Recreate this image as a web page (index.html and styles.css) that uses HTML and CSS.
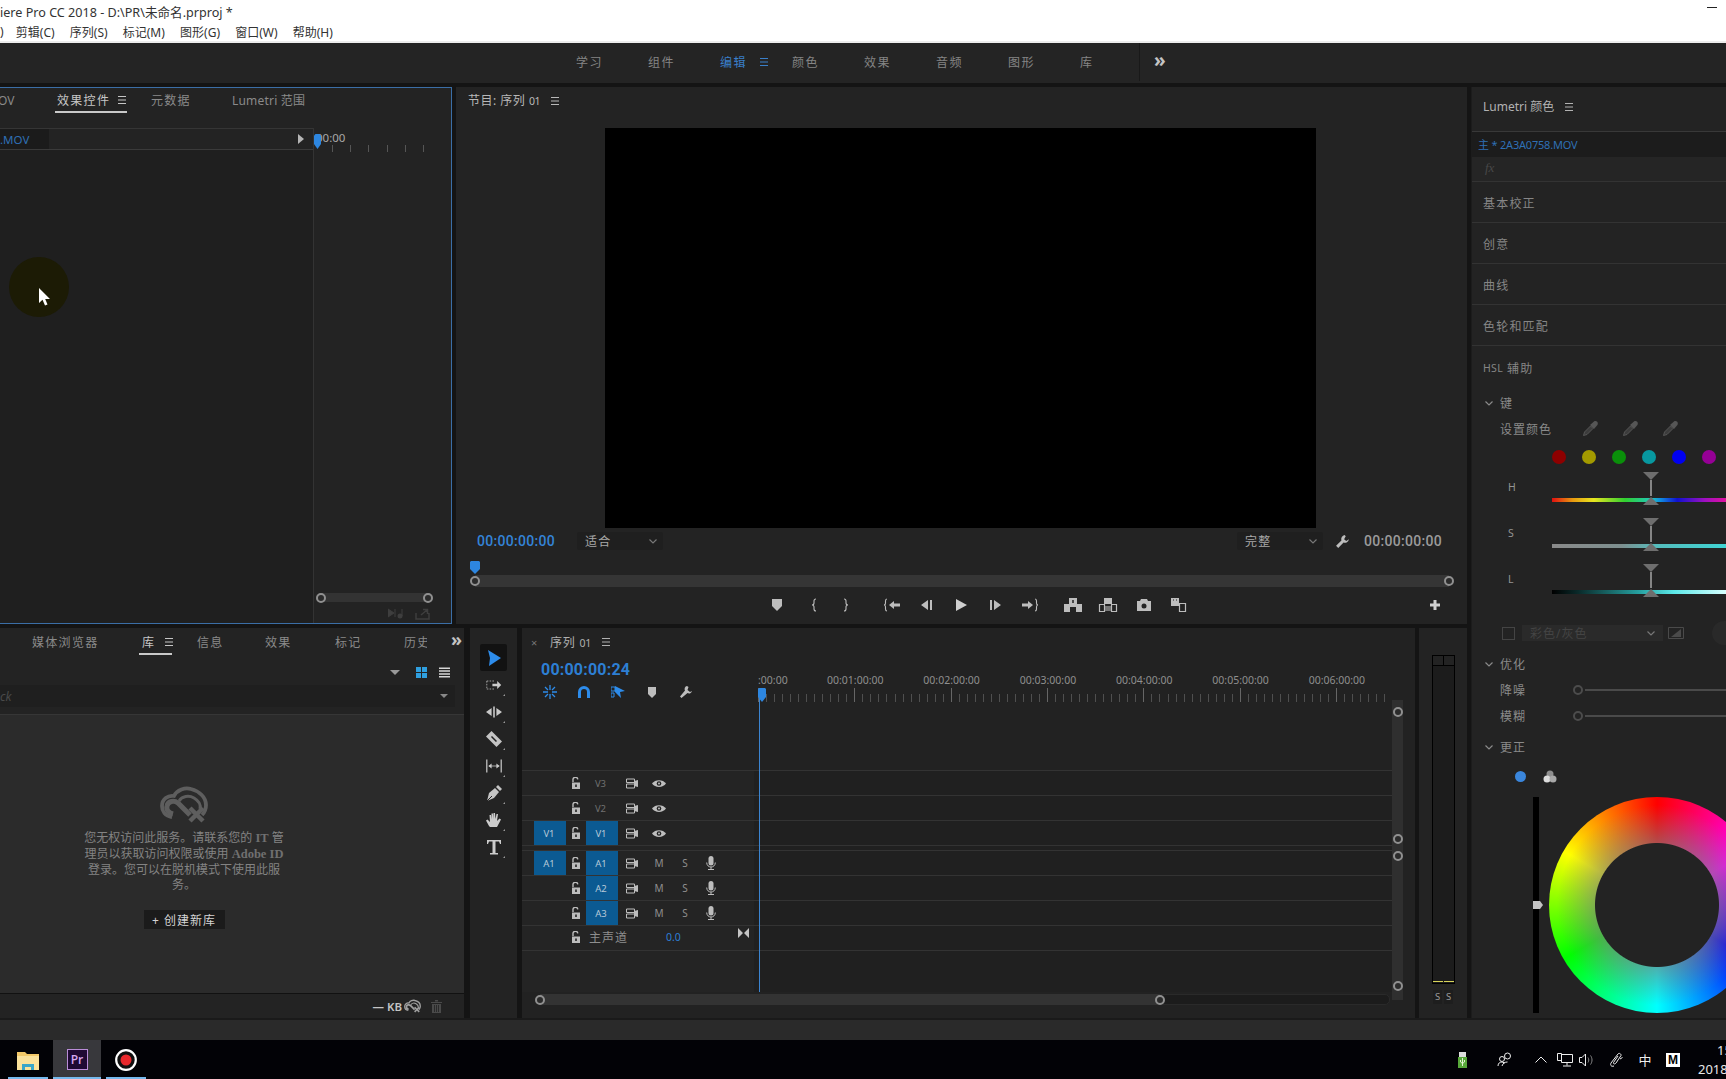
FILE: index.html
```html
<!DOCTYPE html>
<html lang="zh-CN">
<head>
<meta charset="utf-8">
<title>Premiere Pro</title>
<link rel="stylesheet" href="styles.css">
</head>
<body>
<svg class="defs" xmlns="http://www.w3.org/2000/svg">
  <symbol id="i-menu" viewBox="0 0 8 8"><path d="M0 .5h8M0 4h8M0 7.5h8" stroke="currentColor" fill="none"/></symbol>
  <symbol id="i-lock" viewBox="0 0 10 12"><path d="M2 5V3a2.4 2.4 0 0 1 4.8-.6" stroke="currentColor" stroke-width="1.4" fill="none"/><path d="M1 5.5h8V12H1z" fill="currentColor"/><path d="M4.2 7.5h1.6v2.5H4.2z" fill="#222"/></symbol>
  <symbol id="i-sync" viewBox="0 0 13 11"><path d="M.5 1h8v3.5h-8zM.5 6h8v4h-8z" stroke="currentColor" fill="none"/><path d="M8 3l4-1v7l-4-1z" fill="currentColor"/></symbol>
  <symbol id="i-eye" viewBox="0 0 14 9"><path d="M0 4.5C3 0 11 0 14 4.5 11 9 3 9 0 4.5z" fill="currentColor"/><circle cx="7" cy="4.5" r="2.3" fill="#232323"/><circle cx="7" cy="4.5" r="1" fill="currentColor"/></symbol>
  <symbol id="i-mic" viewBox="0 0 10 14"><rect x="2.5" y="0" width="5" height="9.5" rx="2.5" fill="currentColor"/><path d="M.7 6.5c0 6 8.600 6 8.600 0M5 11v2M2 13.500h6" stroke="currentColor" fill="none"/></symbol>
  <symbol id="i-chev" viewBox="0 0 8 5"><path d="M.5.5 4 4 7.500.5" stroke="currentColor" stroke-width="1.200" fill="none"/></symbol>
  <symbol id="i-dropper" viewBox="0 0 16 16"><path d="M1.500 14.500 2.500 11 8.500 5l2.500 2.500-6 6z" fill="#3c3c3c" stroke="currentColor"/><path d="M8 4l4-3.500c1-.8 2.500-.5 3.200.3.700.8.900 2.200.2 3.200L12 8z" fill="currentColor"/></symbol>
  <symbol id="i-handle" viewBox="0 0 16 33"><path d="M0 0h16L8 8z" fill="#6e6e6e"/><path d="M8 8v16" stroke="#e8e8e8"/><path d="M8 25l8 8H0z" fill="#6e6e6e"/></symbol>
  <symbol id="i-cloud" viewBox="0 0 48 37"><path d="M12 31C5 30 2 25 2 20 2 13 8 9 14 10 17 4 25 1 31 3c8 2 15 8 15 16 0 5-2 8-4 10" fill="none" stroke="currentColor" stroke-width="3.800"/><path d="M13 28c-4-1-7-4-6-8 1-5 7-6 11-3l12 12" fill="none" stroke="currentColor" stroke-width="5"/><path d="M19 15c3-5 10-6 15-3 5 3 7 7 6 11" fill="none" stroke="currentColor" stroke-width="3"/><path d="M30 22l13 13M43 22 30 35" stroke="currentColor" stroke-width="4.500"/></symbol>
</svg>

<div class="app">
  <header class="titlebar">
    <span>iere Pro CC 2018 - D:\PR\未命名.prproj *</span>
    <i class="min-dash"></i>
  </header>
  <nav class="menubar">
    <span class="frag">)</span>
    <span>剪辑(C)</span><span>序列(S)</span><span>标记(M)</span><span>图形(G)</span><span>窗口(W)</span><span>帮助(H)</span>
  </nav>

  <div class="workspaces">
    <span class="ws">学习</span>
    <span class="ws">组件</span>
    <span class="ws active">编辑<svg class="menu-ic ws-menu"><use href="#i-menu"/></svg></span>
    <span class="ws">颜色</span>
    <span class="ws">效果</span>
    <span class="ws">音频</span>
    <span class="ws">图形</span>
    <span class="ws last">库</span>
    <span class="ws-more">»</span>
  </div>

  <main class="main">
    <div class="stack">
      <div class="row-top">
        <section class="panel fx">
          <div class="fx-tabs">
            <span class="tab ov">OV</span>
            <span class="tab on">效果控件<svg class="menu-ic"><use href="#i-menu"/></svg></span>
            <span class="tab">元数据</span>
            <span class="tab lum">Lumetri 范围</span>
          </div>
          <div class="fx-body">
            <div class="fx-left">
              <div class="fx-strip">
                <span class="fx-clip">.MOV</span>
                <svg class="fx-arrow" viewBox="0 0 6 10"><path d="M0 0l6 5-6 5z" fill="#b5b5b5"/></svg>
              </div>
            </div>
            <div class="fx-right">
              <div class="fx-time">00:00</div>
              <div class="fx-ticks"></div>
              <div class="fx-fill"></div>
              <div class="fx-scroll"><i class="ring"></i><i class="ring"></i></div>
              <div class="fx-foot">
                <svg viewBox="0 0 16 12"><path d="M0 1l6 4-6 4zM7 1v8" fill="#3e3e3e" stroke="#3e3e3e"/><circle cx="12" cy="8" r="2.500" fill="#3e3e3e"/><path d="M14 8V1" stroke="#3e3e3e"/></svg>
                <svg viewBox="0 0 16 12"><path d="M1 5v6h13V5M6 7l6-5M8 1.500h4.500V6" fill="none" stroke="#3e3e3e" stroke-width="1.500"/></svg>
              </div>
              <svg class="fx-head" viewBox="0 0 7 15"><path d="M0 1.500 1.500 0h4L7 1.500V10l-3.500 5L0 10z" fill="#2d86e0"/></svg>
            </div>
          </div>
          <div class="halo"></div>
          <svg class="cursor" viewBox="0 0 12 18"><path d="M0 0v15l3.500-3.300L6 17.500l2.500-1L6.200 11H11z" fill="#fff"/></svg>
        </section>

        <section class="panel program">
          <div class="pg-title"><span>节目: 序列 <span class="num">01</span></span><svg class="menu-ic"><use href="#i-menu"/></svg></div>
          <div class="video"></div>
          <div class="pg-tc">
            <span class="tc-blue">00:00:00:00</span>
            <span class="drop fit">适合<svg class="drop-ch"><use href="#i-chev"/></svg></span>
            <span class="grow"></span>
            <span class="drop full">完整<svg class="drop-ch"><use href="#i-chev"/></svg></span>
            <svg class="wrench" viewBox="0 0 14 14"><path d="M9 1a3.800 3.800 0 0 0-3 5L1 11l2 2 5-5a3.800 3.800 0 0 0 5-3l-2.500 1.500L8.500 5 10 2z" fill="#bdbdbd"/></svg>
            <span class="tc-grey">00:00:00:00</span>
          </div>
          <div class="pg-head"><svg viewBox="0 0 10 13"><path d="M0 1l1-1h8l1 1v7l-5 5-5-5z" fill="#2d86e0"/></svg></div>
          <div class="pg-scroll"><i class="ring"></i><i class="ring"></i></div>
          <div class="ctrls">
            <svg viewBox="0 0 20 14"><path d="M5 1h10v7l-5 5-5-5z"/></svg>
            <svg viewBox="0 0 20 14"><path d="M12 1c-2 0-2 1-2 2v2c0 1-1 2-2 2 1 0 2 1 2 2v2c0 1 0 2 2 2" fill="none" stroke-width="1.100"/></svg>
            <svg viewBox="0 0 20 14"><path d="M8 1c2 0 2 1 2 2v2c0 1 1 2 2 2-1 0-2 1-2 2v2c0 1 0 2-2 2" fill="none" stroke-width="1.100"/></svg>
            <svg viewBox="0 0 20 14"><path d="M5 1c-1.500 0-1.500 1-1.500 2v2c0 1-.7 2-1.500 2 .8 0 1.500 1 1.500 2v2c0 1 0 2 1.500 2" fill="none" stroke-width="1.100"/><path d="M7 7l5-4v2.500h6v3h-6V11z"/></svg>
            <svg viewBox="0 0 20 14"><path d="M12 2v10L5 7zM14 2h2v10h-2z"/></svg>
            <svg viewBox="0 0 20 14"><path d="M5 1l11 6-11 6z" fill="#cfcfcf" stroke="none"/></svg>
            <svg viewBox="0 0 20 14"><path d="M8 2v10l7-5zM4 2h2v10H4z"/></svg>
            <svg viewBox="0 0 20 14"><path d="M13 7 8 3v2.500H2v3h6V11z"/><path d="M15 1c1.500 0 1.500 1 1.500 2v2c0 1 .7 2 1.500 2-.8 0-1.500 1-1.500 2v2c0 1 0 2-1.500 2" fill="none" stroke-width="1.100"/></svg>
            <svg viewBox="0 0 20 14"><path d="M6 0h8v6h5v8h-6V9H7v5H1V6h5z"/><path d="M10 2v3" stroke="#232323" fill="none" stroke-width="1.500"/></svg>
            <svg viewBox="0 0 20 14"><path d="M6 0h8v6H6z"/><path d="M1.500 6.500h5v7h-5zM13.500 6.500h5v7h-5z" fill="none" stroke-width="1.200"/><path d="M7 8h6v5H7z" fill="#777"/></svg>
            <svg viewBox="0 0 20 14"><path d="M3 3h3l1-2h6l1 2h3v10H3z"/><circle cx="10" cy="8" r="2.500" fill="#232323" stroke="none"/></svg>
            <svg viewBox="0 0 20 14"><path d="M3 0h8v8H3z"/><path d="M11.500 5.500h6v8h-6z" fill="none" stroke-width="1.200"/><path d="M5 2h1M8 2h1M13 8h2M13 11h2" stroke="#232323" stroke-width="1"/></svg>
            <svg viewBox="0 0 20 14"><path d="M8.500 2h3v3.500H15v3h-3.500V12h-3V8.500H5v-3h3.500z" fill="#cfcfcf" stroke="none"/></svg>
          </div>
        </section>
      </div>

      <div class="row-bottom">
        <section class="panel lib">
          <div class="lib-tabs">
            <span class="tab">媒体浏览器</span>
            <span class="tab on lib-on">库<svg class="menu-ic"><use href="#i-menu"/></svg></span>
            <span class="tab">信息</span>
            <span class="tab">效果</span>
            <span class="tab">标记</span>
            <span class="tab cut">历史</span>
            <span class="tab more">»</span>
          </div>
          <div class="lib-view">
            <i class="tri"></i>
            <svg class="lib-grid" viewBox="0 0 11 11"><path d="M0 0h5v5H0zM6 0h5v5H6zM0 6h5v5H0zM6 6h5v5H6z" fill="#2f9fdf"/></svg>
            <svg class="lib-list" viewBox="0 0 11 11"><path d="M0 .5h11v1.500H0zM0 3.300h11v1.500H0zM0 6.200h11v1.500H0zM0 9h11v1.500H0z" fill="#d6d6d6"/></svg>
          </div>
          <div class="lib-search"><em>ck</em><i class="tri small"></i></div>
          <div class="lib-body">
            <svg class="cloud"><use href="#i-cloud"/></svg>
            <p class="lib-msg">您无权访问此服务。请联系您的 <b>IT</b> 管<br>理员以获取访问权限或使用 <b>Adobe ID</b><br>登录。您可以在脱机模式下使用此服<br>务。</p>
            <button class="lib-btn">+ 创建新库</button>
          </div>
          <div class="lib-foot">
            <span>— KB</span>
            <svg class="foot-cloud"><use href="#i-cloud"/></svg>
            <svg class="trash" viewBox="0 0 11 13"><path d="M0 2h11v1H0zM4 0h3v1.500H4zM1 4h9v9H1z" fill="#4a4a4a"/><path d="M3.500 5v7M5.500 5v7M7.500 5v7" stroke="#2a2a2a"/></svg>
          </div>
        </section>

        <section class="panel tools">
          <span class="tool sel"><svg viewBox="0 0 16 16"><path d="M2 0l13 8-12 8 1-8z" fill="#2d8ceb"/></svg></span>
          <span class="tool"><svg viewBox="0 0 20 16"><path d="M1 3h9M1 13h9M1 3v10" stroke="#bbb" stroke-dasharray="2 1.500" fill="none"/><path d="M8 6.500h6V3l5 5-5 5V9.500H8z" fill="#ccc"/></svg></span>
          <span class="tool"><svg viewBox="0 0 20 16"><path d="M0 8l7-5v10zM20 8l-7-5v10z" fill="#c8c8c8"/><path d="M9 1h2v14H9z" fill="#c8c8c8"/></svg></span>
          <span class="tool"><svg viewBox="0 0 16 16"><path d="M5.500 0 16 10.500 10.500 16 0 5.500z" fill="#c4c4c4"/><path d="M5.500 5.500l5 5" stroke="#222" stroke-width="1.500"/></svg></span>
          <span class="tool"><svg viewBox="0 0 20 16"><path d="M1 0v16M19 0v16" stroke="#ccc" stroke-width="1.500"/><path d="M3.500 8h13" stroke="#ccc"/><path d="M3 8l4-3v6zM17 8l-4-3v6z" fill="#ccc"/></svg></span>
          <span class="tool"><svg viewBox="0 0 16 16"><path d="M1 16l2-8 6-5 4 4-5 6z" fill="#c4c4c4"/><path d="M10 2l2-2 4 4-2 2z" fill="#c4c4c4"/><path d="M1 16l5-5" stroke="#222"/></svg></span>
          <span class="tool"><svg viewBox="0 0 16 16"><path d="M3 14 0 8.500l1.500-1L4 10 3.500 3H5l.5 4.500V1.500H7L7.500 7V1h1.500L9.500 7l1-5H12l-1 7 2.500-2.500 1.500 1L11 15H4z" fill="#ccc"/></svg></span>
          <span class="tool"><svg viewBox="0 0 16 16"><path d="M1 1h14v4h-1l-1-2.500H9.500V14H12v1.500H4V14h2.500V2.500H3L2 5H1z" fill="#ccc"/></svg></span>
        </section>

        <section class="panel tl">
          <div class="tl-tab">
            <span class="tl-x">×</span><span class="tl-name">序列 <span class="num">01</span></span><svg class="menu-ic"><use href="#i-menu"/></svg>
          </div>
          <div class="tl-head">
            <div class="tl-left">
              <div class="tl-tc">00:00:00:24</div>
              <div class="tl-tools">
                <svg viewBox="0 0 14 14"><path d="M7 0v5M7 9v5M0 7h5M9 7h5M2 2l3 3M9 9l3 3M12 2 9 5M2 12l3-3" stroke="#2d8ceb" stroke-width="1.300"/></svg>
                <svg viewBox="0 0 14 14"><path d="M2.500 13V7a4.500 4.500 0 0 1 9 0v6" fill="none" stroke="#2d8ceb" stroke-width="3"/></svg>
                <svg viewBox="0 0 14 14"><path d="M4 1l10 5-5 1 1 6-6-6z" fill="#2d8ceb"/><path d="M0 2h4v4H0zM0 8h3v4H0z" fill="none" stroke="#2d8ceb"/></svg>
                <svg viewBox="0 0 14 14"><path d="M3 2h8v7l-4 4-4-4z" fill="#bdbdbd"/></svg>
                <svg viewBox="0 0 14 14"><path d="M8 1a3 3 0 0 0-2 4.500l-5 6 1.500 1.500 6-5a3 3 0 0 0 4.500-2L11 7 8.500 5 9.500 2z" fill="#bdbdbd"/></svg>
              </div>
            </div>
            <div class="tl-ruler">
              <div class="tl-labels">
                <span>:00:00</span><span>00:01:00:00</span><span>00:02:00:00</span><span>00:03:00:00</span><span>00:04:00:00</span><span>00:05:00:00</span><span>00:06:00:00</span>
              </div>
              <div class="tl-ticks"></div>
            </div>
          </div>
          <div class="tl-body">
            <div class="tracks">
              <div class="tracks-top"></div>
              <div class="trk">
                <span></span><span></span><svg class="t-lock"><use href="#i-lock"/></svg><span class="t-name">V3</span>
                <svg class="t-sync"><use href="#i-sync"/></svg><svg class="t-eye"><use href="#i-eye"/></svg>
              </div>
              <div class="trk">
                <span></span><span></span><svg class="t-lock"><use href="#i-lock"/></svg><span class="t-name">V2</span>
                <svg class="t-sync"><use href="#i-sync"/></svg><svg class="t-eye"><use href="#i-eye"/></svg>
              </div>
              <div class="trk">
                <span></span><span class="t-patch">V1</span><svg class="t-lock"><use href="#i-lock"/></svg><span class="t-name t-on">V1</span>
                <svg class="t-sync"><use href="#i-sync"/></svg><svg class="t-eye"><use href="#i-eye"/></svg>
              </div>
              <div class="trk-gap"></div>
              <div class="trk">
                <span></span><span class="t-patch">A1</span><svg class="t-lock"><use href="#i-lock"/></svg><span class="t-name t-on">A1</span>
                <svg class="t-sync"><use href="#i-sync"/></svg><span class="t-txt">M</span><span class="t-txt">S</span><svg class="t-mic"><use href="#i-mic"/></svg>
              </div>
              <div class="trk">
                <span></span><span></span><svg class="t-lock"><use href="#i-lock"/></svg><span class="t-name t-on">A2</span>
                <svg class="t-sync"><use href="#i-sync"/></svg><span class="t-txt">M</span><span class="t-txt">S</span><svg class="t-mic"><use href="#i-mic"/></svg>
              </div>
              <div class="trk">
                <span></span><span></span><svg class="t-lock"><use href="#i-lock"/></svg><span class="t-name t-on">A3</span>
                <svg class="t-sync"><use href="#i-sync"/></svg><span class="t-txt">M</span><span class="t-txt">S</span><svg class="t-mic"><use href="#i-mic"/></svg>
              </div>
              <div class="trk master">
                <span></span><svg class="t-lock"><use href="#i-lock"/></svg><span class="m-name">主声道</span><span class="m-val">0.0</span>
                <svg class="m-ic" viewBox="0 0 11 10"><path d="M0 0l5 5-5 5zM11 0 6 5l5 5z" fill="#c4c4c4"/></svg>
              </div>
            </div>
            <div class="vscroll">
              <i class="ring"></i><i class="vs-a"></i><i class="ring"></i><i class="ring gap-ring"></i><i class="vs-b"></i><i class="ring"></i>
            </div>
          </div>
          <div class="hscroll">
            <div class="hs-thumb"><i class="ring"></i><i class="ring"></i></div>
            <div class="hs-rest"></div>
          </div>
          <div class="tl-line"></div>
          <svg class="tl-head-mark" viewBox="0 0 8 14"><path d="M0 1l1-1h6l1 1v8l-4 5-4-5z" fill="#2d86e0"/></svg>
        </section>

        <section class="panel meter">
          <div class="m-bar">
            <div class="m-top"><i></i><i></i></div>
            <div class="m-mid"><i></i><i></i></div>
          </div>
          <div class="m-solo"><span>S</span><span>S</span></div>
        </section>
      </div>
    </div>

    <aside class="panel lumetri">
      <div class="lu-title"><span>Lumetri 颜色</span><svg class="menu-ic"><use href="#i-menu"/></svg></div>
      <div class="lu-clip">主 * 2A3A0758.MOV</div>
      <div class="lu-fx"><em>fx</em></div>
      <div class="lu-sec">基本校正</div>
      <div class="lu-sec">创意</div>
      <div class="lu-sec">曲线</div>
      <div class="lu-sec">色轮和匹配</div>
      <div class="lu-sec plain"><span class="hsl">HSL</span> 辅助</div>

      <div class="lu-group first"><svg class="lu-ch"><use href="#i-chev"/></svg>键</div>
      <div class="lu-setc"><span class="lu-setl">设置颜色</span>
        <svg class="drp"><use href="#i-dropper"/></svg><svg class="drp"><use href="#i-dropper"/></svg><svg class="drp"><use href="#i-dropper"/></svg>
      </div>
      <div class="lu-dots"><i class="d1"></i><i class="d2"></i><i class="d3"></i><i class="d4"></i><i class="d5"></i><i class="d6"></i></div>
      <div class="lu-sl sl-first"><span class="sl-lab">H</span><div class="sl-cell"><div class="bar bar-h"></div><svg class="sl-h"><use href="#i-handle"/></svg></div></div>
      <div class="lu-sl"><span class="sl-lab">S</span><div class="sl-cell"><div class="bar bar-s"></div><svg class="sl-h"><use href="#i-handle"/></svg></div></div>
      <div class="lu-sl"><span class="sl-lab">L</span><div class="sl-cell"><div class="bar bar-l"></div><svg class="sl-h"><use href="#i-handle"/></svg></div></div>
      <div class="lu-mask">
        <i class="cb"></i>
        <span class="mask-dd">彩色/灰色<svg class="drop-ch"><use href="#i-chev"/></svg></span>
        <svg class="mask-ic" viewBox="0 0 16 12"><path d="M.5.500h15v11H.5z" fill="none" stroke="#4a4a4a"/><path d="M3 10 13 2v8z" fill="#4a4a4a"/></svg>
        <i class="mask-c"></i>
      </div>
      <div class="lu-group"><svg class="lu-ch"><use href="#i-chev"/></svg>优化</div>
      <div class="lu-ref"><span>降噪</span><i class="ring dim"></i><i class="ref-line"></i></div>
      <div class="lu-ref"><span>模糊</span><i class="ring dim"></i><i class="ref-line"></i></div>
      <div class="lu-group"><svg class="lu-ch"><use href="#i-chev"/></svg>更正</div>
      <div class="lu-mode">
        <i class="mode-dot"></i>
        <svg class="mode-tri" viewBox="0 0 14 13"><circle cx="7" cy="4" r="3.500" fill="#8f8f8f"/><circle cx="4" cy="9" r="3.500" fill="#dcdcdc"/><circle cx="10" cy="9" r="3.500" fill="#a8a8a8"/></svg>
      </div>
      <div class="lu-wheel">
        <div class="w-bar"><i class="w-thumb"></i></div>
        <div class="wheel"></div>
      </div>
    </aside>
  </main>

  <div class="status"></div>

  <footer class="taskbar">
    <span class="task run">
      <svg viewBox="0 0 22 20"><path d="M0 2h8l2 2h12v16H0z" fill="#f3c969"/><path d="M0 6h22v14H0z" fill="#fbe29b"/><path d="M5 20v-6h12v6h-3v-3H8v3z" fill="#3aa6c9"/></svg>
    </span>
    <span class="task run active"><span class="pr">Pr</span></span>
    <span class="task run">
      <svg viewBox="0 0 22 22"><circle cx="11" cy="11" r="9.800" fill="#111" stroke="#fff" stroke-width="2.200"/><circle cx="11" cy="11" r="5.500" fill="#e8282c"/></svg>
    </span>
    <span class="grow"></span>
    <div class="tray">
      <svg class="t-usb" viewBox="0 0 9 16"><path d="M1 0h7v5H1z" fill="#ddd"/><path d="M0 5h9v11H0z" fill="#57a83a"/><path d="M4.500 6v8M2.500 8v2l2 1.500M6.500 8v2l-2 1.500" stroke="#dff3d0" fill="none"/></svg>
      <svg class="t-people" viewBox="0 0 16 15"><circle cx="10.500" cy="4" r="3" fill="none" stroke="#eee"/><circle cx="5" cy="7" r="2.500" fill="none" stroke="#eee"/><path d="M1 14c0-3 2-4 4-4l3 1M5 14c1-3 3-4 5.500-4" fill="none" stroke="#eee"/></svg>
      <svg class="t-up" viewBox="0 0 12 7"><path d="M.5 6.500 6 1l5.500 5.500" fill="none" stroke="#eee"/></svg>
      <svg class="t-net" viewBox="0 0 16 14"><path d="M4.500 1.500h11v8h-11zM.5.500h4v7h-4zM10 9.500v3M6 13h8" fill="none" stroke="#eee"/></svg>
      <svg class="t-vol" viewBox="0 0 16 14"><path d="M.5 4.500h2.500L6.500 1v12L3 9.500H.5z" fill="none" stroke="#eee"/><path d="M9 4.500c1 1.500 1 3.500 0 5M11.500 2.500c2 2.800 2 6.200 0 9" fill="none" stroke="#888"/></svg>
      <svg class="t-pen" viewBox="0 0 16 16"><path d="M5 14c-3 1-4-1-3-3l7-9c1-1.500 3.500 0 3 1.500L7 11c-1 1.500-3 1-2.500-.5L9 4" fill="none" stroke="#eee"/><path d="M11 7l2.500-1.500" stroke="#eee"/></svg>
      <span class="t-ime">中</span>
      <span class="t-m">M</span>
      <div class="clock"><span class="c-time">15</span><span>2018</span></div>
    </div>
  </footer>
</div>
</body>
</html>
```
FILE: styles.css
```css
* { box-sizing: border-box; }
html, body { margin: 0; padding: 0; background: #141414; }
body {
  width: 1726px;
  height: 1079px;
  overflow: hidden;
  font-family: "Noto Sans", "Noto Sans CJK SC", sans-serif;
  font-size: 12px;
  color: #8e8e8e;
}
i, em { font-style: normal; }
svg { display: block; flex: none; }
.defs { display: none; }
.grow { flex: 1; }
.num { font-size: 10.500px; letter-spacing: -.4px; }

.app { width: 1726px; height: 1079px; display: flex; flex-direction: column; overflow: hidden; background: #141414; }

/* window chrome */
.titlebar {
  height: 22px; background: #fff; color: #333; display: flex; align-items: center;
  justify-content: space-between; font-size: 12.600px; padding-right: 9px; white-space: nowrap;
}
.min-dash { width: 10px; height: 1px; background: #222; margin-bottom: 8px; }
.menubar {
  height: 21px; background: #fff; color: #333; display: flex; align-items: center; gap: 15.200px;
  font-size: 12px; border-bottom: 2px solid #ececec; white-space: nowrap;
}
.frag { margin-right: -3px; }

.workspaces { height: 40px; background: #242424; display: flex; align-items: center; padding: 0 0 2px 576px; flex: none; }
.ws { width: 72px; font-size: 12px; letter-spacing: 1.500px; color: #858585; display: flex; align-items: center; }
.ws.active { color: #3a7fc9; }
.ws-menu { margin-left: 13px; }
.ws.last { width: 60px; height: 38px; border-right: 1px solid #191919; }
.ws-more { margin-left: 14px; font-size: 19px; font-weight: 700; color: #c4c4c4; line-height: 1; margin-top: -3px; }
.menu-ic { width: 8px; height: 8px; color: currentColor; }

.main { height: 931px; margin-top: 4px; display: flex; gap: 4px; flex: none; }
.stack { width: 1467px; display: flex; flex-direction: column; gap: 4px; }
.row-top { height: 537px; display: flex; gap: 4px; }
.row-bottom { height: 390px; display: flex; }
.panel { background: #232323; position: relative; overflow: hidden; }

.tab { font-size: 12px; letter-spacing: 1.300px; color: #8a8a8a; white-space: nowrap; display: flex; align-items: center; height: 24px; justify-self: start; }
.tab.on { color: #c6c6c6; border-bottom: 2px solid #c9c9c9; height: 25px; }
.tab .menu-ic { margin-left: 8px; }
.tab.ov { letter-spacing: 0; margin-left: -2px; }
.tab.lum { letter-spacing: .2px; }

/* effect controls */
.fx { width: 452px; border: 1px solid #3b6ea6; border-left: 0; }
.fx-tabs { display: grid; grid-template-columns: 55px 96px 81px auto; height: 40px; align-items: start; }
.fx-tabs .on { padding-left: 2px; padding-right: 1px; }
.fx-body { display: flex; height: 495px; }
.fx-left { width: 313px; background: #1f1f1f; }
.fx-strip { height: 22px; display: flex; align-items: center; justify-content: space-between; background: #232323; border-top: 1px solid #353535; border-bottom: 1px solid #3a3a3a; padding-right: 9px; }
.fx-clip { width: 49px; height: 20px; background: #1b1b1b; color: #2f70b5; font-size: 11.500px; display: flex; align-items: center; }
.fx-arrow { width: 6px; height: 10px; }
.fx-right { flex: 1; border-left: 1px solid #333; position: relative; display: flex; flex-direction: column; }
.fx-time { font-size: 11.500px; color: #a8a8a8; padding: 3px 0 0 2px; height: 17px; line-height: 14px; }
.fx-ticks { height: 7px; margin-left: 18px; width: 92px; background: repeating-linear-gradient(90deg, #555 0 1px, transparent 1px 18.200px); }
.fx-fill { flex: 1; }
.fx-scroll { height: 9px; margin: 0 18px 0 2px; background: #333; border-radius: 5px; display: flex; justify-content: space-between; align-items: center; }
.fx-foot { height: 21px; padding: 2px 20px 0 0; display: flex; justify-content: flex-end; gap: 11px; align-items: center; }
.fx-foot svg { width: 16px; height: 12px; }
.fx-head { position: absolute; left: 0; top: 6px; width: 7px; height: 15px; }
.halo { position: absolute; left: 9px; top: 169px; width: 60px; height: 60px; border-radius: 50%; background: #1c1b05; }
.cursor { position: absolute; left: 39px; top: 200px; width: 12px; height: 18px; }
.ring { display: block; width: 10px; height: 10px; flex: none; border-radius: 50%; border: 2.500px solid #909090; background: #2b2b2b; }
.ring.dim { border-color: #4c4c4c; background: #232323; }

/* program monitor */
.program { flex: 1; }
.pg-title { height: 41px; padding: 5px 0 0 12px; display: flex; align-items: flex-start; gap: 11px; font-size: 12px; letter-spacing: .5px; color: #b8b8b8; line-height: 17px; }
.pg-title .menu-ic { margin-top: 5px; }
.video { width: 711px; height: 400px; margin-left: 149px; background: #000; }
.pg-tc { height: 18px; margin-top: 4px; padding: 0 25px 0 21px; display: flex; align-items: center; }
.tc-blue, .tc-grey { font-family: Roboto, sans-serif; font-size: 14px; letter-spacing: .3px; }
.tc-blue { width: 100px; color: #3484d8; font-weight: 500; }
.tc-grey { color: #9b9b9b; margin-left: 14px; font-weight: 500; }
.drop { height: 18px; background: #1f1f1f; color: #a8a8a8; display: flex; align-items: center; justify-content: space-between; padding: 0 6px 0 8px; letter-spacing: 1.300px; border-radius: 2px; }
.drop.fit { width: 86px; }
.drop.full { width: 86px; }
.drop-ch { width: 8px; height: 5px; color: #777; }
.wrench { width: 15px; height: 15px; margin-left: 12px; }
.pg-head { height: 14px; margin-top: 11px; padding-left: 14px; }
.pg-head svg { width: 10px; height: 13px; }
.pg-scroll { height: 12px; margin: 0 18px 0 19px; background: #353535; display: flex; justify-content: space-between; align-items: center; }
.pg-scroll .ring:first-child { margin-left: -5px; }
.pg-scroll .ring:last-child { margin-right: -5px; }
.ctrls { height: 36px; display: grid; grid-template-columns: 311px 37px 32px 46px 34px 35px 35px 34px 43px 35px 36px 34px 257px 20px; align-items: center; justify-items: start; }
.ctrls svg { grid-row: 1; width: 20px; height: 14px; fill: #bdbdbd; stroke: #bdbdbd; stroke-width: 0; }
.ctrls svg:nth-child(1) { grid-column: 2; }
.ctrls svg:nth-child(2) { grid-column: 3; }
.ctrls svg:nth-child(3) { grid-column: 4; }
.ctrls svg:nth-child(4) { grid-column: 5; }
.ctrls svg:nth-child(5) { grid-column: 6; }
.ctrls svg:nth-child(6) { grid-column: 7; }
.ctrls svg:nth-child(7) { grid-column: 8; }
.ctrls svg:nth-child(8) { grid-column: 9; }
.ctrls svg:nth-child(9) { grid-column: 10; }
.ctrls svg:nth-child(10) { grid-column: 11; }
.ctrls svg:nth-child(11) { grid-column: 12; }
.ctrls svg:nth-child(12) { grid-column: 13; }
.ctrls svg:nth-child(13) { grid-column: 14; }

/* library */
.lib { width: 464px; display: flex; flex-direction: column; }
.lib-tabs { height: 32px; display: grid; grid-template-columns: 32px 107px 58px 68px 70px 69px 47px; align-items: start; padding-top: 2px; }
.lib-tabs .tab:first-child { grid-column: 2; }
.lib-tabs .tab { grid-row: 1; }
.lib-tabs .tab:nth-child(2) { grid-column: 3; }
.lib-tabs .tab:nth-child(3) { grid-column: 4; }
.lib-tabs .tab:nth-child(4) { grid-column: 5; }
.lib-tabs .tab:nth-child(5) { grid-column: 6; }
.lib-tabs .tab:nth-child(6) { grid-column: 7; }
.lib-tabs .tab:nth-child(7) { grid-column: 8; }
.lib-on { width: 33px; padding-left: 3px; }
.lib-on .menu-ic { margin-left: 10px; }
.cut { width: 23px; overflow: hidden; }
.tab.more { font-size: 18px; font-weight: 700; color: #c4c4c4; margin-top: -3px; }
.lib-view { height: 25px; display: flex; align-items: center; justify-content: flex-end; padding: 0 14px 0 0; flex: none; }
.tri { display: block; width: 0; height: 0; border: 5px solid transparent; border-top: 5px solid #999; border-bottom: 0; }
.tri.small { border-width: 4px; border-top-color: #888; border-bottom: 0; }
.lib-grid { width: 11px; height: 11px; margin-left: 16px; }
.lib-list { width: 11px; height: 11px; margin-left: 12px; }
.lib-search { height: 22px; margin-right: 9px; background: #1f1f1f; display: flex; align-items: center; justify-content: space-between; padding-right: 7px; color: #4a4a4a; flex: none; }
.lib-search em { font-style: italic; font-size: 12px; }
.lib-body { margin-top: 7px; flex: 1; background: #2b2b2b; border-top: 1px solid #363636; border-bottom: 1px solid #111; padding: 71px 96px 0 0; display: flex; flex-direction: column; align-items: center; }
.cloud { width: 48px; height: 37px; color: #5e5e5e; }
.lib-msg { margin: 7px 0 0; font-size: 12px; line-height: 15px; text-align: center; color: #838383; white-space: nowrap; }
.lib-msg b { font-family: "Liberation Serif", serif; color: #707070; font-size: 12.500px; }
.lib-btn { margin-top: 18px; width: 81px; height: 19px; padding: 0; border: 0; background: #1b1b1b; color: #d4d4d4; font: 12px "Noto Sans", "Noto Sans CJK SC", sans-serif; letter-spacing: 1px; }
.lib-foot { height: 24px; flex: none; display: flex; align-items: center; justify-content: flex-end; padding-right: 22px; color: #c4c4c4; font-size: 11.500px; font-weight: 600; }
.foot-cloud { width: 17px; height: 14px; margin-left: 2px; color: #a0a0a0; }
.trash { width: 11px; height: 13px; margin-left: 10px; }

/* tools */
.tools { width: 47px; margin-left: 6px; display: flex; flex-direction: column; align-items: center; padding-top: 16px; }
.tool { width: 27px; height: 27px; display: flex; align-items: center; justify-content: center; position: relative; }
.tool svg { width: 16px; height: 16px; }
.tool.sel { background: #121212; border-radius: 2px; }
.tool:not(.sel)::after { content: ""; position: absolute; right: 2px; bottom: 2px; border: 1.500px solid transparent; border-right-color: #999; border-bottom-color: #999; }

/* timeline */
.tl { width: 893px; margin-left: 5px; display: flex; flex-direction: column; background: #222; }
.tl-tab { height: 28px; display: flex; align-items: center; padding-left: 9px; color: #b0b0b0; }
.tl-x { font-size: 11px; width: 19px; color: #777; }
.tl-name { letter-spacing: .8px; }
.tl-tab .menu-ic { margin-left: 11px; }
.tl-head { height: 52px; display: flex; flex: none; }
.tl-left { width: 236px; padding: 4px 0 0 19px; }
.tl-tc { font-family: Roboto, sans-serif; font-weight: 700; font-size: 16px; line-height: 20px; color: #2d7fd4; letter-spacing: .2px; }
.tl-tools { display: flex; gap: 20px; margin-top: 5px; padding-left: 2px; }
.tl-tools svg { width: 14px; height: 14px; }
.tl-ruler { flex: 1; padding-top: 17px; }
.tl-labels { display: grid; grid-template-columns: 69px repeat(6, 96.330px); height: 14px; font-size: 10.500px; line-height: 14px; color: #8f8f8f; white-space: nowrap; }
.tl-ticks { width: 628px; height: 14px; margin-top: 1px; background:
  repeating-linear-gradient(90deg, #666 0 1px, transparent 1px 96.330px) 0 0 / 100% 14px no-repeat,
  repeating-linear-gradient(90deg, #4f4f4f 0 1px, transparent 1px 8.030px) 0 100% / 100% 8px no-repeat; }
.tl-body { height: 284px; display: flex; flex: none; }
.tracks { width: 870px; background: linear-gradient(90deg, #242424 0 232px, #202020 232px); display: flex; flex-direction: column; }
.tracks-top { height: 62px; background: #222; }
.trk { height: 25px; border-top: 1px solid #333; display: grid; grid-template-columns: 12px 32px 20px 32px 28px 26px 26px 26px; align-items: center; justify-items: center; }
.trk > * { height: 100%; }
.trk-gap { height: 5px; border-top: 1px solid #333; }
.t-lock { width: 10px; height: 12px; color: #bdbdbd; align-self: center; }
.trk > .t-lock { height: 12px; }
.t-name { width: 100%; font-size: 9.500px; color: #707070; display: flex; align-items: center; justify-content: center; padding-right: 3px; }
.t-on, .t-patch { width: 100%; background: #0b5a92; color: #b6c9d8; font-size: 9.500px; display: flex; align-items: center; justify-content: center; padding-right: 2px; }
.trk > .t-sync { width: 13px; height: 11px; color: #bdbdbd; align-self: center; }
.trk > .t-eye { width: 14px; height: 9px; color: #bdbdbd; align-self: center; }
.t-txt { font-size: 10px; color: #909090; display: flex; align-items: center; }
.trk > .t-mic { width: 10px; height: 14px; color: #bdbdbd; align-self: center; }
.master { grid-template-columns: 44px 20px 76px 73px 16px; border-bottom: 1px solid #333; height: 26px; justify-items: start; padding-bottom: 2px; }
.master .t-lock { justify-self: center; }
.m-name { margin-left: 3px; letter-spacing: 1px; color: #8e8e8e; display: flex; align-items: center; }
.m-val { font-size: 10.500px; color: #2d7fd4; margin-left: 4px; display: flex; align-items: center; }
.trk > .m-ic { width: 11px; height: 10px; align-self: start; margin: 2px 0 0 3px; }
.vscroll { width: 11px; margin-top: -8px; background: #2f2f2f; height: 300px; display: flex; flex-direction: column; align-items: center; padding-top: 7px; flex: none; }
.vs-a { display: block; height: 117px; flex: none; }
.vs-b { display: block; height: 120px; flex: none; }
.gap-ring { margin-top: 7px; }
.hscroll { height: 11px; margin: 2px 25px 0 18px; display: flex; flex: none; }
.hs-thumb { width: 620px; background: #333; display: flex; justify-content: space-between; align-items: center; position: relative; z-index: 1; }
.hs-thumb .ring:last-child { margin-right: -5px; }
.hs-thumb .ring:first-child { margin-left: -5px; }
.hs-rest { flex: 1; background: #1c1c1c; border: 1px solid #2a2a2a; border-radius: 0 5px 5px 0; }
.tl-line { position: absolute; left: 237px; top: 60px; width: 1px; height: 304px; background: #3b84d0; }
.tl-head-mark { position: absolute; left: 236px; top: 60px; width: 8px; height: 14px; }

/* meter */
.meter { width: 48px; margin-left: 4px; display: flex; flex-direction: column; align-items: center; padding-top: 27px; }
.m-bar { width: 23px; height: 329px; border: 1px solid #000; display: flex; flex-direction: column; }
.m-top { height: 10px; border-bottom: 1px solid #000; display: flex; }
.m-top i, .m-mid i { flex: 1; }
.m-top i:first-child { border-right: 1px solid #000; }
.m-mid { flex: 1; display: flex; gap: 1px; align-items: flex-end; padding-bottom: 1px; background: #1c1c1c; }
.m-mid i { height: 1px; background: #d8d45a; }
.m-solo { display: flex; gap: 2px; margin-top: 6px; }
.m-solo span { width: 9px; height: 14px; background: #1e1e1e; font-size: 9.500px; line-height: 14px; text-align: center; color: #9a9a9a; }

/* lumetri */
.lumetri { flex: 1; border-left: 1px solid #1c1c1c; white-space: nowrap; }
.lu-title { height: 44px; padding: 11px 0 0 11px; display: flex; gap: 11px; align-items: flex-start; color: #b2b2b2; font-size: 12px; line-height: 17px; }
.lu-title .menu-ic { margin-top: 5px; }
.lu-clip { height: 26px; border-top: 1px solid #383838; background: #1c1c1c; color: #2f70b5; padding-left: 6px; line-height: 25px; font-size: 11px; letter-spacing: -.2px; }
.lu-fx { height: 25px; padding-left: 13px; border-bottom: 1px solid #333; background: #252525; color: #484848; font-family: "Liberation Serif", serif; line-height: 22px; font-size: 13px; }
.lu-fx em { font-style: italic; }
.lu-sec { height: 41px; display: flex; align-items: center; padding: 2px 0 0 11px; border-bottom: 1px solid #333; letter-spacing: 1.200px; color: #868686; font-size: 12px; }
.lu-sec.plain { border: 0; }
.hsl { font-size: 10.500px; margin-right: 4px; letter-spacing: .3px; }
.lu-group { height: 22px; margin-top: 9px; padding-left: 13px; display: flex; align-items: center; color: #8a8a8a; letter-spacing: 1px; font-size: 12px; }
.lu-group.first { margin-top: 5px; }
.lu-ch { width: 8px; height: 5px; margin-right: 7px; color: #8a8a8a; }
.lu-setc { height: 22px; margin-top: 4px; padding-left: 28px; display: flex; align-items: center; letter-spacing: 1px; color: #8a8a8a; }
.lu-setl { width: 82px; }
.drp { width: 16px; height: 16px; color: #565656; margin-right: 24px; }
.lu-dots { height: 16px; margin-top: 9px; padding-left: 80px; display: flex; align-items: center; gap: 16px; }
.lu-dots i { width: 14px; height: 14px; border-radius: 50%; display: block; flex: none; }
.d1 { background: #8e0000; } .d2 { background: #a39a00; } .d3 { background: #0a8f0a; } .d4 { background: #0898a0; } .d5 { background: #0000f0; } .d6 { background: #960096; }
.lu-sl { height: 46px; display: grid; grid-template-columns: 80px 1fr; }
.sl-first { margin-top: 5px; }
.sl-lab { margin: 8px 0 0 36px; font-size: 10.500px; line-height: 18px; color: #949494; }
.sl-cell { position: relative; padding-top: 28px; }
.bar { height: 4px; width: 100%; }
.bar-h { background: linear-gradient(90deg, #e01010 0, #e89a10 12%, #e6e620 24%, #30d030 42%, #20c8b8 57%, #1090e0 62%, #1010d0 72%, #a010c0 88%, #e010a0 100%); }
.bar-s { background: linear-gradient(90deg, #8a8a8a 0, #7d8f8f 40%, #55bcbc 60%, #3fd4d4 100%); }
.bar-l { background: linear-gradient(90deg, #000 0, #0a2a2a 15%, #26a0a0 50%, #5ce8e8 70%, #d8ffff 100%); }
.sl-h { position: absolute; left: 91px; top: 2px; width: 16px; height: 33px; }
.lu-mask { height: 22px; margin-top: 14px; padding-left: 30px; display: flex; align-items: center; }
.cb { display: block; width: 13px; height: 13px; border: 1.500px solid #444; flex: none; }
.mask-dd { width: 141px; height: 16px; margin-left: 7px; background: #2a2a2a; color: #444; display: flex; align-items: center; justify-content: space-between; padding: 0 8px; letter-spacing: 1px; flex: none; }
.mask-ic { width: 16px; height: 12px; margin-left: 5px; }
.mask-c { display: block; width: 40px; height: 24px; border-radius: 12px; background: #292929; margin-left: 28px; flex: none; }
.lu-ref { height: 22px; margin-top: 4px; padding-left: 28px; display: flex; align-items: center; letter-spacing: 1px; color: #8a8a8a; }
.lu-ref span { width: 73px; flex: none; }
.ref-line { flex: 1; height: 2px; margin-left: 2px; background: #4a4a4a; }
.lu-mode { height: 18px; margin-top: 9px; padding-left: 43px; display: flex; align-items: center; }
.mode-dot { display: block; width: 11px; height: 11px; border-radius: 50%; background: #3a86dc; flex: none; }
.mode-tri { width: 14px; height: 13px; margin-left: 17px; }
.lu-wheel { margin-top: 12px; padding-left: 61px; display: flex; gap: 10px; }
.w-bar { width: 6px; height: 216px; background: #000; display: flex; align-items: center; flex: none; }
.w-thumb { display: block; width: 10px; height: 8px; flex: none; background: #c4c4c4; clip-path: polygon(0 0, 70% 0, 100% 50%, 70% 100%, 0 100%); }
.wheel { width: 216px; height: 216px; flex: none; border-radius: 50%; background:
  radial-gradient(circle at center, #232323 0 61.500px, rgba(125,125,125,.6) 62.500px, rgba(125,125,125,0) 100px),
  conic-gradient(#ff0000, #ff00ff, #0000ff, #00ffff, #00ff00, #ffff00, #ff0000); }

/* bottom */
.status { height: 22px; flex: none; background: #2a2a2a; border-top: 2px solid #1a1a1a; }
.taskbar { height: 39px; flex: none; background: #020206; display: flex; align-items: stretch; padding-left: 8px; }
.task { width: 40px; margin-right: 5px; display: flex; align-items: center; justify-content: center; }
.task.run { box-shadow: inset 0 -2px 0 #76b9ed; }
.task.active { width: 48px; background: #38383c; margin-right: 5px; }
.task svg { width: 22px; height: 22px; }
.pr { width: 21px; height: 21px; border: 1px solid #b98cd8; background: #1f0a33; color: #d6a8f0; font: 600 12px "Open Sans", sans-serif; display: flex; align-items: center; justify-content: center; }
.tray { display: grid; grid-template-columns: 44px 42px 30px 18px 26px 34px 22px 34px 36px; width: 286px; align-items: center; justify-items: center; }
.t-usb { width: 9px; height: 16px; }
.t-people { width: 16px; height: 15px; }
.t-up { width: 12px; height: 7px; }
.t-net { width: 16px; height: 14px; }
.t-vol { width: 16px; height: 14px; }
.t-pen { width: 16px; height: 16px; }
.t-ime { font-size: 13px; color: #eee; font-family: "Noto Sans CJK SC", sans-serif; }
.t-m { width: 14px; height: 14px; background: #fff; color: #000; font: 700 12px/14px "Liberation Sans", sans-serif; text-align: center; }
.clock { justify-self: start; display: flex; flex-direction: column; width: 28px; margin-left: 8px; font: 13px/19px "Noto Sans", sans-serif; color: #e8e8e8; }
.c-time { margin-left: 19px; }
```
